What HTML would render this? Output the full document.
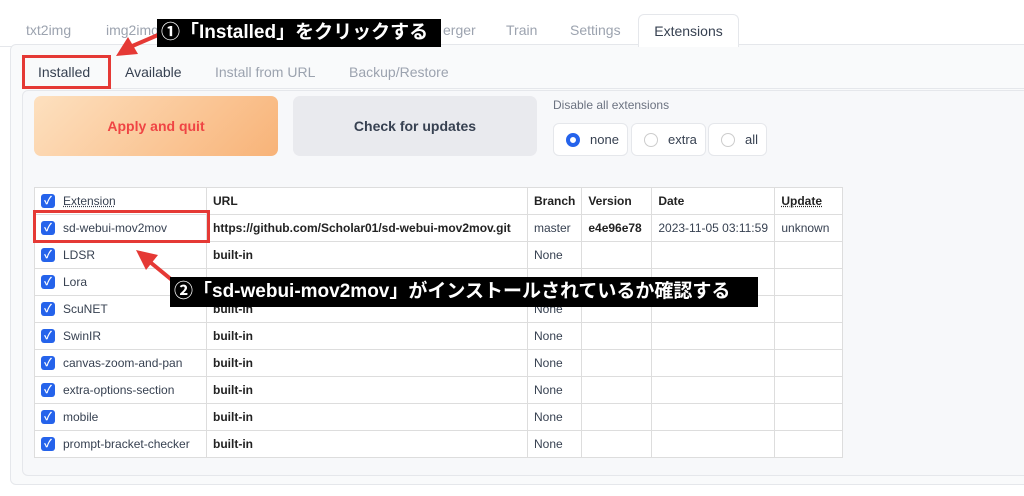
<!DOCTYPE html><html><head><meta charset="utf-8"><style>
*{box-sizing:border-box;margin:0;padding:0}
body{width:1024px;height:496px;background:#fff;font-family:"Liberation Sans","Noto Sans CJK JP",sans-serif;position:relative;overflow:hidden;color:#374151}
.a{position:absolute}
.tab{position:absolute;top:22px;font-size:14px;color:#9ca3af}
.outer{left:10px;top:44px;width:1030px;height:441px;border:1px solid #e5e7eb;border-radius:6px;background:#f9fafb}
.inner{left:22px;top:90px;width:1010px;height:386px;border:1px solid #e5e7eb;border-radius:6px;background:#f7f8fa}
.st{position:absolute;top:64px;font-size:14px}
table{position:absolute;left:34px;top:187px;border-collapse:collapse;font-size:12px;background:#fff}
td{border:1px solid #ddd;height:27px;padding:0 6px;white-space:nowrap;vertical-align:middle;line-height:14px}
td.c1{width:172px;padding-left:6px}
.cb{display:inline-block;width:14px;height:14px;background:#2563eb;border-radius:3px;vertical-align:top;margin-right:8px;color:#fff;font-size:11px;line-height:14px;text-align:center;font-weight:bold}
b{font-weight:bold;color:#222}
.radio{position:absolute;top:123px;height:33px;background:#fff;border:1px solid #e5e7eb;border-radius:6px;font-size:13px;line-height:31px;padding-left:36px;color:#374151}
.radio i{position:absolute;left:12px;top:9px;width:14px;height:14px;border-radius:50%;border:1px solid #ccc}
.blk{background:#000;color:#fff;font-weight:bold;white-space:nowrap}
.red{border:3px solid #e53935}
</style></head><body>
<div class="a" style="left:0;top:46px;width:1024px;height:1px;background:#e5e7eb"></div>
<span class="tab" style="left:26px">txt2img</span>
<span class="tab" style="left:106px">img2img</span>
<span class="tab" style="left:443px">erger</span>
<span class="tab" style="left:506px">Train</span>
<span class="tab" style="left:570px">Settings</span>
<div class="a outer"></div>
<div class="a" style="left:638px;top:14px;width:101px;height:33px;background:#fff;border:1px solid #e5e7eb;border-bottom:none;border-radius:6px 6px 0 0;font-size:14px;color:#374151;text-align:center;line-height:32px">Extensions</div>
<div class="a" style="left:22px;top:88px;width:1010px;height:1px;background:#e5e7eb"></div>
<div class="a inner"></div>
<span class="st" style="left:38px;color:#374151">Installed</span>
<span class="st" style="left:125px;color:#374151">Available</span>
<span class="st" style="left:215px;color:#9ca3af">Install from URL</span>
<span class="st" style="left:349px;color:#9ca3af">Backup/Restore</span>
<div class="a" style="left:34px;top:96px;width:244px;height:60px;border-radius:7px;background:linear-gradient(135deg,#fde0bf,#f8b378);color:#ef4444;font-weight:bold;font-size:14px;text-align:center;line-height:60px">Apply and quit</div>
<div class="a" style="left:293px;top:96px;width:244px;height:60px;border-radius:7px;background:#e9eaee;color:#374151;font-weight:bold;font-size:14px;text-align:center;line-height:60px">Check for updates</div>
<div class="a" style="left:553px;top:98px;font-size:12px;color:#6b7280">Disable all extensions</div>
<div class="radio" style="left:553px;width:75px"><i style="border:4px solid #2563eb;background:#fff"></i>none</div>
<div class="radio" style="left:631px;width:75px"><i></i>extra</div>
<div class="radio" style="left:708px;width:59px"><i></i>all</div>
<table>
<tr><td class="c1"><span class="cb">✓</span><span style="text-decoration:underline dotted">Extension</span></td><td style="width:321px"><b>URL</b></td><td style="width:54px"><b>Branch</b></td><td style="width:70px"><b>Version</b></td><td style="width:123px"><b>Date</b></td><td style="width:68px"><b style="text-decoration:underline dotted">Update</b></td></tr>
<tr><td class="c1"><span class="cb">✓</span>sd-webui-mov2mov</td><td><b>https://github.com/Scholar01/sd-webui-mov2mov.git</b></td><td>master</td><td><b>e4e96e78</b></td><td>2023-11-05 03:11:59</td><td>unknown</td></tr>
<tr><td class="c1"><span class="cb">✓</span>LDSR</td><td><b>built-in</b></td><td>None</td><td></td><td></td><td></td></tr>
<tr><td class="c1"><span class="cb">✓</span>Lora</td><td><b>built-in</b></td><td>None</td><td></td><td></td><td></td></tr>
<tr><td class="c1"><span class="cb">✓</span>ScuNET</td><td><b>built-in</b></td><td>None</td><td></td><td></td><td></td></tr>
<tr><td class="c1"><span class="cb">✓</span>SwinIR</td><td><b>built-in</b></td><td>None</td><td></td><td></td><td></td></tr>
<tr><td class="c1"><span class="cb">✓</span>canvas-zoom-and-pan</td><td><b>built-in</b></td><td>None</td><td></td><td></td><td></td></tr>
<tr><td class="c1"><span class="cb">✓</span>extra-options-section</td><td><b>built-in</b></td><td>None</td><td></td><td></td><td></td></tr>
<tr><td class="c1"><span class="cb">✓</span>mobile</td><td><b>built-in</b></td><td>None</td><td></td><td></td><td></td></tr>
<tr><td class="c1"><span class="cb">✓</span>prompt-bracket-checker</td><td><b>built-in</b></td><td>None</td><td></td><td></td><td></td></tr>
</table>
<div class="a red" style="left:22px;top:55px;width:89px;height:34px"></div>
<div class="a red" style="left:33px;top:210px;width:177px;height:33px"></div>
<svg class="a" style="left:0;top:0" width="1024" height="496">
<line x1="158" y1="35" x2="130" y2="47" stroke="#e53935" stroke-width="4"/>
<polygon points="116,56 128,37 138,54" fill="#e53935"/>
<line x1="178" y1="285" x2="150" y2="262" stroke="#e53935" stroke-width="4"/>
<polygon points="136,250 158,255 146,270" fill="#e53935"/>
</svg>
<div class="a blk" style="left:157px;top:19px;width:284px;height:28px;font-size:19px;line-height:28px;padding-left:4px">①「Installed」をクリックする</div>
<div class="a blk" style="left:170px;top:277px;width:588px;height:30px;font-size:19px;line-height:30px;padding-left:4px">②「sd-webui-mov2mov」がインストールされているか確認する</div>
</body></html>
